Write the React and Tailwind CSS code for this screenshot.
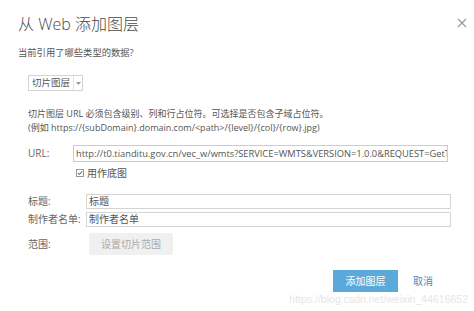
import React from "react";

const font = {
  fontFamily: '"Open Sans", "Noto Sans CJK SC", sans-serif',
};

function Field({ label, children, labelWidth = "w-[58px]" }) {
  return (
    <div className="flex items-center">
      <span className={`${labelWidth} shrink-0 text-[10px] text-[#666]`}>
        {label}
      </span>
      {children}
    </div>
  );
}

export default function App() {
  return (
    <div
      className="relative w-[474px] h-[311px] bg-white overflow-hidden text-[#555]"
      style={font}
    >
      <div className="pt-[13px] pl-[18px] pr-[7px]">
        <div className="flex items-center justify-between h-[22px]">
          <h1 className="text-[16px] leading-[22px] font-light text-[#4a4a4a]">
            从 Web 添加图层
          </h1>
          <svg width="10" height="10" viewBox="0 0 10 10" className="mb-[2px]">
            <path
              d="M1 1 L9 9 M9 1 L1 9"
              stroke="#999"
              strokeWidth="1.2"
              fill="none"
            />
          </svg>
        </div>
        <p className="mt-[11px] h-[14px] text-[9.3px] leading-[14px] text-[#555]">
          当前引用了哪些类型的数据?
        </p>
      </div>

      <div className="pl-[28px]">
        <div className="mt-[15px] flex items-center h-[16px] w-[55px] border border-[#d4d4d4] bg-white">
          <span className="px-[3px] text-[9.5px] leading-[14px] text-[#555]">
            切片图层
          </span>
          <span className="h-full border-l border-[#e2e2e2]" />
          <span className="flex-1 flex justify-center">
            <svg width="5" height="3" viewBox="0 0 5 3">
              <path d="M0 0 L5 0 L2.5 3 Z" fill="#999" />
            </svg>
          </span>
        </div>

        <div className="mt-[16px] text-[9px] leading-[14px] text-[#555]">
          <p>切片图层 URL 必须包含级别、列和行占位符。可选择是否包含子域占位符。</p>
          <p>
            (例如 https://{"{subDomain}"}.domain.com/&lt;path&gt;/{"{level}"}/
            {"{col}"}/{"{row}"}.jpg)
          </p>
        </div>

        <div className="mt-[10px]">
          <Field label="URL:" labelWidth="w-[45px]">
            <div className="w-[375px] h-[17px] border border-[#ccc] px-[2px] overflow-hidden whitespace-nowrap text-[9.3px] leading-[15px] text-[#555]">
              http://t0.tianditu.gov.cn/vec_w/wmts?SERVICE=WMTS&amp;VERSION=1.0.0&amp;REQUEST=GetT
            </div>
          </Field>
        </div>

        <div className="mt-[5px] ml-[48px] flex items-center h-[12px] gap-[3px]">
          <span className="w-[8px] h-[8px] border border-[#999] flex items-center justify-center">
            <svg width="6" height="6" viewBox="0 0 6 6">
              <path
                d="M0.8 3 L2.4 4.6 L5.2 1.2"
                stroke="#444"
                strokeWidth="1"
                fill="none"
              />
            </svg>
          </span>
          <span className="text-[10px] leading-[12px] text-[#555]">用作底图</span>
        </div>

        <div className="mt-[15px]">
          <Field label="标题:">
            <div className="w-[365px] h-[15px] border border-[#d4d4d4] px-[2px] text-[10px] leading-[13px] text-[#555]">
              标题
            </div>
          </Field>
        </div>
        <div className="mt-[3px]">
          <Field label="制作者名单:">
            <div className="w-[365px] h-[15px] border border-[#d4d4d4] px-[2px] text-[10px] leading-[13px] text-[#555]">
              制作者名单
            </div>
          </Field>
        </div>
        <div className="mt-[6px]">
          <Field label="范围:">
            <button className="ml-[3px] w-[84px] h-[22px] rounded-[2px] bg-[#f0f0f0] text-[10px] text-[#aaa]">
              设置切片范围
            </button>
          </Field>
        </div>
      </div>

      <div className="mt-[15px] flex items-center justify-end pr-[41px]">
        <button className="w-[65px] h-[22px] bg-[#5ba9d9] text-white text-[10px]">
          添加图层
        </button>
        <span className="ml-[15px] text-[10px] text-[#3b8fc9]">取消</span>
      </div>

      <div
        className="absolute right-[6px] bottom-[3px] text-[10.5px] text-[#e6e6e6]"
        style={{ fontFamily: '"Liberation Sans", sans-serif' }}
      >
        https://blog.csdn.net/weixin_44616652
      </div>
    </div>
  );
}
